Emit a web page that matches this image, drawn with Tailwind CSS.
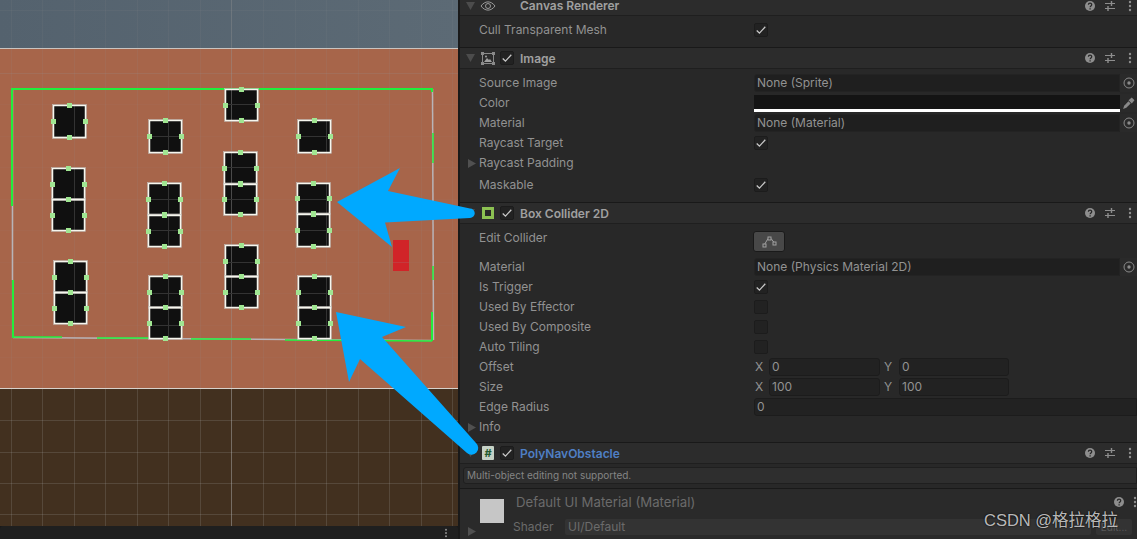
<!DOCTYPE html>
<html lang="en">
<head>
<meta charset="UTF-8">
<title>Box Collider 2D Inspector</title>
<script src="https://cdn.jsdelivr.net/npm/@tailwindcss/browser@4"></script>
</head>
<body class="bg-[#191919]">
<div class="relative flex h-[539px] w-[1137px] overflow-hidden font-[family-name:Inter,sans-serif] text-[12px] text-[#929292]">

  <svg class="hidden">
    <symbol id="help" viewBox="0 0 12 12"><circle cx="6" cy="6" r="5" fill="#8e8e8e"/><path d="M4.400 4.800c0-2.100 3.300-2.100 3.300-.1 0 1.200-1.600 1.200-1.600 2.600M6.100 8.200v1.200" fill="none" stroke="#282828" stroke-width="1.300"/></symbol>
    <symbol id="sliders" viewBox="0 0 12 12"><path d="M1 3.500h10M1 8.500h10" stroke="#8e8e8e" stroke-width="1"/><path d="M7.500 1v5M4 6v5" stroke="#8e8e8e" stroke-width="1.400"/></symbol>
    <symbol id="dots" viewBox="0 0 12 12"><circle cx="6" cy="2" r="1.200" fill="#8e8e8e"/><circle cx="6" cy="6" r="1.200" fill="#8e8e8e"/><circle cx="6" cy="10" r="1.200" fill="#8e8e8e"/></symbol>
    <symbol id="target" viewBox="0 0 12 12"><circle cx="6" cy="6" r="5" fill="none" stroke="#8a8a8a" stroke-width="1"/><circle cx="6" cy="6" r="1.700" fill="#8a8a8a"/></symbol>
    <symbol id="check" viewBox="0 0 14 14"><path d="M2 7.500l3.200 3.200 6.800-7.500" fill="none" stroke="#c8c8c8" stroke-width="1.500"/></symbol>
    <symbol id="fold-down" viewBox="0 0 9 8"><path d="M0 0h9L4.500 8z" fill="#4c4c4c"/></symbol>
    <symbol id="fold-right" viewBox="0 0 8 9"><path d="M0 0l8 4.500L0 9z" fill="#505050"/></symbol>
  </svg>

  <!-- scene view -->
  <div class="flex w-[458px] shrink-0 flex-col">
    <svg id="scene" class="h-[526px] w-[458px]" viewBox="0 0 458 526"></svg>
    <div class="flex h-[13px] items-center justify-end rounded-t-[3px] bg-[#1f1f1f] pr-[7px]">
      <svg class="h-[10px] w-[10px]"><use href="#dots"/></svg>
    </div>
  </div>

  <!-- inspector -->
  <div class="ml-[2px] flex w-[677px] flex-col bg-[#282828]">
    <div class="-mt-[4px] flex h-[20px] shrink-0 items-center border-b border-[#1f1f1f] bg-[#2c2c2c] pl-[6px] pr-[1px]">
      <svg class="h-[8px] w-[9px]"><use href="#fold-down"/></svg>
      <svg class="ml-[5px] h-[14px] w-[16px]" viewBox="0 0 16 14"><path d="M1 7c4-5.500 10-5.500 14 0-4 5.500-10 5.500-14 0z" fill="none" stroke="#9a9a9a"/><circle cx="8" cy="7" r="2.500" fill="none" stroke="#9a9a9a"/></svg>
      <span class="ml-[24px] font-semibold text-[#a0a0a0]">Canvas Renderer</span>
      <div class="ml-auto flex gap-[8px]">
        <svg class="h-[12px] w-[12px]"><use href="#help"/></svg>
        <svg class="h-[12px] w-[12px]"><use href="#sliders"/></svg>
        <svg class="h-[12px] w-[12px]"><use href="#dots"/></svg>
      </div>
    </div>
    <div class="mt-[4px] flex h-[20px] shrink-0 items-center pl-[19px]">
      <span class="w-[275px]">Cull Transparent Mesh</span>
      <span class="h-[14px] w-[14px] rounded-[2px] border border-[#1c1c1c] bg-[#222222]"><svg class="h-[12px] w-[12px]" viewBox="0 0 14 14"><use href="#check"/></svg></span>
    </div>

    <div class="mt-[7px] flex h-[22px] shrink-0 items-center border-y border-t-[#191919] border-b-[#1f1f1f] bg-[#2c2c2c] pl-[6px] pr-[1px]">
      <svg class="h-[8px] w-[9px]"><use href="#fold-down"/></svg>
      <svg class="ml-[6px] h-[13px] w-[14px]" viewBox="0 0 14 13"><rect x="1.500" y="1.500" width="11" height="10" fill="none" stroke="#8a8a8a"/><rect x="0" y="0" width="3" height="3" fill="#8a8a8a"/><rect x="11" y="0" width="3" height="3" fill="#8a8a8a"/><rect x="0" y="10" width="3" height="3" fill="#8a8a8a"/><rect x="11" y="10" width="3" height="3" fill="#8a8a8a"/><path d="M3 10l3-4 2 2 1-1 2 3z" fill="#a0a0a0"/><circle cx="5" cy="4.500" r="1" fill="#a0a0a0"/></svg>
      <span class="ml-[5px] h-[14px] w-[14px] rounded-[2px] border border-[#1c1c1c] bg-[#222222]"><svg class="h-[12px] w-[12px]" viewBox="0 0 14 14"><use href="#check"/></svg></span>
      <span class="ml-[6px] mt-[2px] font-semibold text-[#a0a0a0]">Image</span>
      <div class="ml-auto flex gap-[8px]">
        <svg class="h-[12px] w-[12px]"><use href="#help"/></svg>
        <svg class="h-[12px] w-[12px]"><use href="#sliders"/></svg>
        <svg class="h-[12px] w-[12px]"><use href="#dots"/></svg>
      </div>
    </div>
    <div class="mt-[4px] flex h-[20px] shrink-0 items-center pl-[19px]">
      <span class="w-[275px]">Source Image</span>
      <div class="flex h-[18px] w-[366px] items-center rounded-l-[3px] border border-[#232323] bg-[#1f1f1f] pl-[2px]">None (Sprite)</div>
      <div class="flex h-[18px] w-[17px] items-center justify-center bg-[#2a2a2a]"><svg class="h-[12px] w-[12px]"><use href="#target"/></svg></div>
    </div>
    <div class="flex h-[20px] shrink-0 items-center pl-[19px]">
      <span class="w-[275px]">Color</span>
      <div class="flex h-[17px] w-[366px] flex-col bg-[#141414]"><div class="mt-auto h-[3px] bg-white"></div></div>
      <div class="flex h-[18px] w-[17px] items-center justify-center bg-[#2a2a2a]">
        <svg class="h-[13px] w-[13px]" viewBox="0 0 12 12"><path d="M1 11l1-3 4-4 2 2-4 4z" fill="#8a8a8a"/><path d="M6 3l3-2.500 2.500 2.500L9 6z" fill="#8a8a8a"/></svg>
      </div>
    </div>
    <div class="flex h-[20px] shrink-0 items-center pl-[19px]">
      <span class="w-[275px]">Material</span>
      <div class="flex h-[18px] w-[366px] items-center rounded-l-[3px] border border-[#232323] bg-[#1f1f1f] pl-[2px]">None (Material)</div>
      <div class="flex h-[18px] w-[17px] items-center justify-center bg-[#2a2a2a]"><svg class="h-[12px] w-[12px]"><use href="#target"/></svg></div>
    </div>
    <div class="flex h-[20px] shrink-0 items-center pl-[19px]">
      <span class="w-[275px]">Raycast Target</span>
      <span class="h-[14px] w-[14px] rounded-[2px] border border-[#1c1c1c] bg-[#222222]"><svg class="h-[12px] w-[12px]" viewBox="0 0 14 14"><use href="#check"/></svg></span>
    </div>
    <div class="flex h-[20px] shrink-0 items-center pl-[8px]">
      <svg class="h-[9px] w-[8px]"><use href="#fold-right"/></svg>
      <span class="ml-[3px]">Raycast Padding</span>
    </div>
    <div class="mt-[2px] flex h-[20px] shrink-0 items-center pl-[19px]">
      <span class="w-[275px]">Maskable</span>
      <span class="h-[14px] w-[14px] rounded-[2px] border border-[#1c1c1c] bg-[#222222]"><svg class="h-[12px] w-[12px]" viewBox="0 0 14 14"><use href="#check"/></svg></span>
    </div>

    <div class="mt-[7px] flex h-[22px] shrink-0 items-center border-y border-t-[#191919] border-b-[#1f1f1f] bg-[#2c2c2c] pl-[6px] pr-[1px]">
      <svg class="h-[8px] w-[9px]"><use href="#fold-down"/></svg>
      <svg class="ml-[7px] h-[12px] w-[12px]" viewBox="0 0 12 12"><rect x="1.500" y="1.500" width="9" height="9" fill="#282828" stroke="#8cc152" stroke-width="3"/></svg>
      <span class="ml-[6px] h-[14px] w-[14px] rounded-[2px] border border-[#1c1c1c] bg-[#222222]"><svg class="h-[12px] w-[12px]" viewBox="0 0 14 14"><use href="#check"/></svg></span>
      <span class="ml-[6px] mt-[2px] font-semibold text-[#a0a0a0]">Box Collider 2D</span>
      <div class="ml-auto flex gap-[8px]">
        <svg class="h-[12px] w-[12px]"><use href="#help"/></svg>
        <svg class="h-[12px] w-[12px]"><use href="#sliders"/></svg>
        <svg class="h-[12px] w-[12px]"><use href="#dots"/></svg>
      </div>
    </div>
    <div class="flex h-[33px] shrink-0 pl-[19px] pt-[5px]">
      <span class="w-[274px]">Edit Collider</span>
      <div class="mt-[2px] flex h-[21px] w-[32px] items-center justify-center rounded-[3px] border border-[#1a1a1a] bg-[#484848]">
        <svg class="h-[12px] w-[15px]" viewBox="0 0 15 12"><path d="M2.500 8.500L6 2.500h3l3.500 4.500" fill="none" stroke="#a0a0a0"/><rect x="1" y="8" width="3" height="3" fill="#484848" stroke="#a0a0a0"/><rect x="6" y="1" width="3" height="3" fill="#484848" stroke="#a0a0a0"/><rect x="11" y="6" width="3" height="3" fill="#484848" stroke="#a0a0a0"/></svg>
      </div>
    </div>
    <div class="flex h-[20px] shrink-0 items-center pl-[19px]">
      <span class="w-[275px]">Material</span>
      <div class="flex h-[18px] w-[366px] items-center rounded-l-[3px] border border-[#232323] bg-[#1f1f1f] pl-[2px]">None (Physics Material 2D)</div>
      <div class="flex h-[18px] w-[17px] items-center justify-center bg-[#2a2a2a]"><svg class="h-[12px] w-[12px]"><use href="#target"/></svg></div>
    </div>
    <div class="flex h-[20px] shrink-0 items-center pl-[19px]">
      <span class="w-[275px]">Is Trigger</span>
      <span class="h-[14px] w-[14px] rounded-[2px] border border-[#1c1c1c] bg-[#222222]"><svg class="h-[12px] w-[12px]" viewBox="0 0 14 14"><use href="#check"/></svg></span>
    </div>
    <div class="flex h-[20px] shrink-0 items-center pl-[19px]">
      <span class="w-[275px]">Used By Effector</span>
      <span class="h-[14px] w-[14px] rounded-[2px] border border-[#1c1c1c] bg-[#222222]"></span>
    </div>
    <div class="flex h-[20px] shrink-0 items-center pl-[19px]">
      <span class="w-[275px]">Used By Composite</span>
      <span class="h-[14px] w-[14px] rounded-[2px] border border-[#1c1c1c] bg-[#222222]"></span>
    </div>
    <div class="flex h-[20px] shrink-0 items-center pl-[19px]">
      <span class="w-[275px]">Auto Tiling</span>
      <span class="h-[14px] w-[14px] rounded-[2px] border border-[#1c1c1c] bg-[#222222]"></span>
    </div>
    <div class="flex h-[20px] shrink-0 items-center pl-[19px]">
      <span class="w-[276px]">Offset</span>
      <span class="w-[14px]">X</span>
      <div class="flex h-[18px] w-[111px] items-center rounded-[3px] border border-[#1c1c1c] bg-[#222222] pl-[2px]">0</div>
      <span class="ml-[4px] w-[15px]">Y</span>
      <div class="flex h-[18px] w-[110px] items-center rounded-[3px] border border-[#1c1c1c] bg-[#222222] pl-[2px]">0</div>
    </div>
    <div class="flex h-[20px] shrink-0 items-center pl-[19px]">
      <span class="w-[276px]">Size</span>
      <span class="w-[14px]">X</span>
      <div class="flex h-[18px] w-[111px] items-center rounded-[3px] border border-[#1c1c1c] bg-[#222222] pl-[2px]">100</div>
      <span class="ml-[4px] w-[15px]">Y</span>
      <div class="flex h-[18px] w-[110px] items-center rounded-[3px] border border-[#1c1c1c] bg-[#222222] pl-[2px]">100</div>
    </div>
    <div class="flex h-[20px] shrink-0 items-center pl-[19px]">
      <span class="w-[275px]">Edge Radius</span>
      <div class="flex h-[18px] flex-1 items-center rounded-l-[3px] border border-[#1c1c1c] bg-[#222222] pl-[2px]">0</div>
    </div>
    <div class="flex h-[20px] shrink-0 items-center pl-[8px]">
      <svg class="h-[9px] w-[8px]"><use href="#fold-right"/></svg>
      <span class="ml-[3px]">Info</span>
    </div>

    <div class="mt-[5px] flex h-[22px] shrink-0 items-center border-y border-t-[#191919] border-b-[#1f1f1f] bg-[#2c2c2c] pl-[6px] pr-[1px]">
      <svg class="h-[8px] w-[9px]"><use href="#fold-down"/></svg>
      <span class="ml-[7px] flex h-[14px] w-[12px] items-center justify-center rounded-[1px] bg-[#c6d2c6] text-[11px] font-bold leading-none text-[#235a2e]">#</span>
      <span class="ml-[6px] h-[14px] w-[14px] rounded-[2px] border border-[#1c1c1c] bg-[#222222]"><svg class="h-[12px] w-[12px]" viewBox="0 0 14 14"><use href="#check"/></svg></span>
      <span class="ml-[6px] mt-[2px] font-semibold text-[#4f7fc4]">PolyNavObstacle</span>
      <div class="ml-auto flex gap-[8px]">
        <svg class="h-[12px] w-[12px]"><use href="#help"/></svg>
        <svg class="h-[12px] w-[12px]"><use href="#sliders"/></svg>
        <svg class="h-[12px] w-[12px]"><use href="#dots"/></svg>
      </div>
    </div>
    <div class="ml-[3px] mt-[3px] flex h-[17px] shrink-0 items-center rounded-l-[3px] border border-[#1f1f1f] bg-[#2e2e2e] pl-[3px] text-[10px] text-[#858585]">Multi-object editing not supported.</div>
    <div class="mt-[4px] flex flex-1 border-t border-[#191919] bg-[#2a2a2a] pl-[8px]">
      <div class="flex w-[12px] flex-col justify-end pb-[3px]"><svg class="h-[9px] w-[8px]"><use href="#fold-right"/></svg></div>
      <div class="mt-[10px] h-[24px] w-[24px] bg-[#c6c6c6]"></div>
      <div class="ml-[9px] flex flex-1 flex-col text-[#6b6b6b]">
        <div class="relative mt-[5px] flex h-[18px] items-center pl-[3px] text-[13.200px]">Default UI Material (Material)
          <div class="absolute right-[-4px] top-[2px] flex gap-[4px]">
            <svg class="h-[12px] w-[12px]"><use href="#help"/></svg>
            <svg class="h-[12px] w-[12px]"><use href="#dots"/></svg>
          </div>
        </div>
        <div class="mt-[6px] flex items-center">
          <span class="w-[52px]">Shader</span>
          <div class="flex h-[16px] w-[526px] items-center rounded-[2px] bg-[#333333] pl-[3px]">UI/Default</div>
          <div class="ml-[5px] flex h-[16px] w-[36px] items-center justify-center rounded-[2px] bg-[#333333] text-[10px] text-[#5a5a5a]">Edit...</div>
        </div>
      </div>
    </div>
  </div>

  <!-- arrows drawn over the screenshot -->
  <svg class="pointer-events-none absolute left-0 top-0 h-[539px] w-[1137px]" viewBox="0 0 1137 539">
    <path d="M337 202L400 168 388 191 470 208.500A4.700 4.700 0 0 1 470 218L385 222.500 392 247z" fill="#00a9ff"/>
    <path d="M336 312L406 327 382 337 476 443A5.500 5.500 0 0 1 467 453L360 359 349 382z" fill="#00a9ff"/>
  </svg>

  <!-- blog watermark -->
  <div class="absolute left-[984px] top-[510px] font-[family-name:'Liberation_Sans','Noto_Sans_CJK_SC',sans-serif] text-[16.500px] leading-[20px] text-[#cfcfcf]/90 [text-shadow:0_0_2px_#000]">CSDN @格拉格拉</div>
</div>

<script>
  // scene is a free canvas, so it is built with plain svg shapes
  const scene = document.getElementById('scene');
  let out = '<defs><linearGradient id="sky"><stop offset="0" stop-color="#54626e"/><stop offset="1" stop-color="#5c6a75"/></linearGradient></defs>';

  function rect(x, y, w, h, fill) {
    out += `<rect x="${x}" y="${y}" width="${w}" height="${h}" fill="${fill}"/>`;
  }
  function line(x1, y1, x2, y2, color, width) {
    out += `<line x1="${x1}" y1="${y1}" x2="${x2}" y2="${y2}" stroke="${color}" stroke-width="${width || 1}"/>`;
  }

  rect(0, 0, 458, 48, 'url(#sky)');
  rect(0, 49, 458, 339, '#a7654a');
  rect(0, 389, 458, 137, '#42301f');

  const gridX = [11, 42, 74, 105, 137, 168, 200, 231, 263, 295, 326, 358, 389, 421, 452];
  const gridY = [73, 104, 136, 167, 199, 230, 262, 293, 325, 357];

  // grid is faint on the brown floor, clearer above and below it
  gridX.forEach(x => {
    const major = x === 231;
    line(x + 0.5, 0, x + 0.5, 48, `rgba(150,150,150,${major ? 0.35 : 0.1})`);
    line(x + 0.5, 49, x + 0.5, 388, `rgba(150,150,150,${major ? 0.4 : 0.13})`);
    line(x + 0.5, 389, x + 0.5, 526, `rgba(170,170,170,${major ? 0.5 : 0.2})`);
  });
  line(0, 10.5, 458, 10.5, 'rgba(150,150,150,0.1)');
  line(0, 73.5, 458, 73.5, 'rgba(150,150,150,0.2)');
  gridY.slice(1).forEach(y => line(0, y + 0.5, 458, y + 0.5, 'rgba(150,150,150,0.05)'));
  [420, 452, 483, 514].forEach(y => line(0, y + 0.5, 458, y + 0.5, 'rgba(170,170,170,0.2)'));

  line(0, 48.5, 458, 48.5, '#c9c4c0');
  line(0, 388.5, 458, 388.5, '#d8d2cc');

  // boundary outline: grey box with green stretches on top
  const grey = '#b8b4b8', green = '#22ee3c';
  line(12.5, 89, 12.5, 280, grey, 1.5);
  line(432.5, 89, 433.5, 340, grey, 1.5);
  line(13, 337.5, 432, 340.5, grey, 1.5);
  line(11, 89, 433, 89, green, 2);
  line(12, 89, 12, 206, green, 2);
  line(13, 280, 13, 338, green, 2);
  line(13, 337, 62, 337, green, 1.5);
  line(97, 338, 155, 338, green, 1.5);
  line(191, 339, 251, 339, green, 1.5);
  line(285, 340, 432, 341, green, 1.5);
  line(432, 89, 432, 92, green, 2);
  line(433, 133, 433, 163, green, 1.5);
  line(432, 312, 432, 341, green, 2);
  line(433, 266, 433, 280, green, 1.5);

  rect(393, 240, 16, 31, '#d12428');
  line(393, 262.5, 409, 262.5, 'rgba(150,150,150,0.2)');

  const blocks = [
    [53.5, 105.5, 32, 32], [149.5, 120.5, 32, 32], [225.5, 89.5, 32, 31], [298.5, 120.5, 32, 32],
    [52.5, 168.5, 32, 31], [52.5, 199.5, 32, 31], [148.5, 183.5, 32, 31], [148.5, 215.5, 32, 31],
    [224.5, 152.5, 32, 31], [224.5, 184.5, 32, 30], [297.5, 183.5, 32, 30], [297.5, 214.5, 32, 32],
    [54.5, 261.5, 32, 31], [54.5, 292.5, 32, 31], [149.5, 276.5, 32, 31], [149.5, 307.5, 32, 31],
    [225.5, 245.5, 32, 31], [225.5, 276.5, 32, 31], [298.5, 276.5, 32, 31], [298.5, 307.5, 32, 31]
  ];
  blocks.forEach(([x, y, w, h]) => {
    rect(x, y, w, h, '#101010');
    // grid shows through the black squares
    gridX.filter(g => g > x && g < x + w).forEach(g => line(g + 0.5, y, g + 0.5, y + h, g === 231 ? '#4a4a4a' : '#333333'));
    gridY.filter(g => g > y && g < y + h).forEach(g => line(x, g + 0.5, x + w, g + 0.5, '#333333'));
  });
  blocks.forEach(([x, y, w, h]) => {
    out += `<rect x="${x}" y="${y}" width="${w}" height="${h}" fill="none" stroke="#f6f6ee" stroke-width="1.5"/>`;
    out += `<rect x="${x - 1}" y="${y - 1}" width="${w + 2}" height="${h + 2}" fill="none" stroke="#c0bcb8" stroke-width="0.6"/>`;
  });
  blocks.forEach(([x, y, w, h]) => {
    [[x + w / 2, y], [x + w / 2, y + h], [x, y + h / 2], [x + w, y + h / 2]].forEach(([hx, hy]) => {
      rect(Math.round(hx - 2.5), Math.round(hy - 2.5), 5, 5, '#a0e692');
    });
  });

  scene.innerHTML = out;
</script>
</body>
</html>
